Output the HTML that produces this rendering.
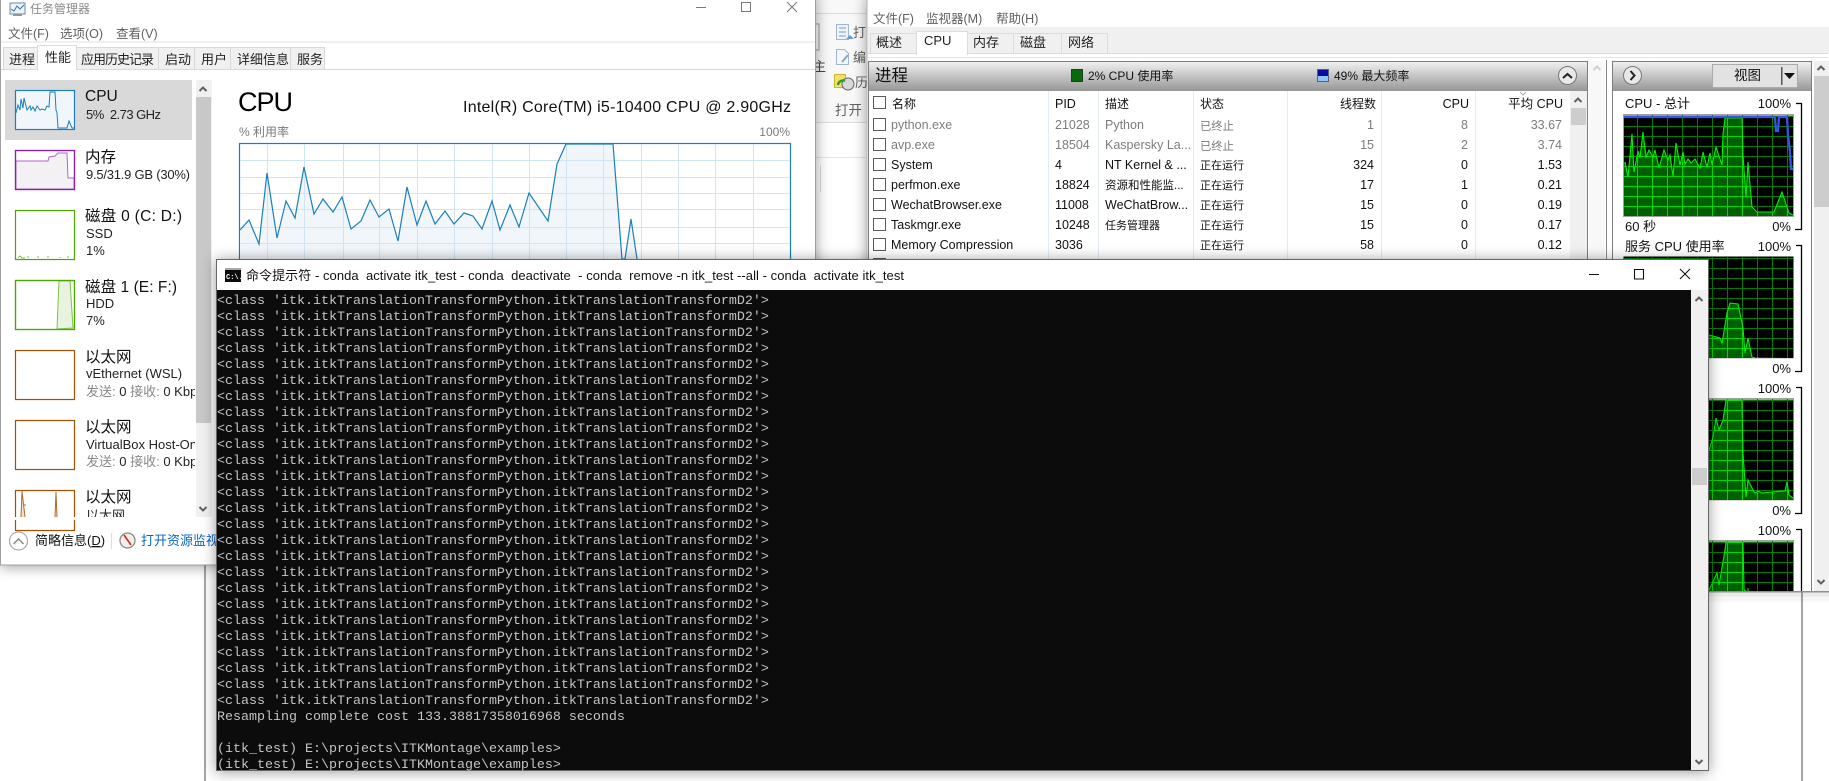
<!DOCTYPE html>
<html><head><meta charset="utf-8"><title>任务管理器</title>
<style>
html,body{margin:0;padding:0;background:#fff;width:1829px;height:781px;overflow:hidden}
svg{display:block}
text{font-family:"Liberation Sans","Noto Sans CJK SC",sans-serif;font-size:12.5px;fill:#111;white-space:pre}
.t{font-size:15.5px;fill:#111}
.s{font-size:13px;fill:#222}
.g{fill:#7c7c7c}
.m{font-size:12.5px;fill:#606060}
.tab{font-size:13px;fill:#222}
.r{text-anchor:end}
.c{font-family:"Liberation Mono","Noto Sans CJK SC",monospace;font-size:13.33px;fill:#c4c4c4}
.sh{filter:drop-shadow(0 1px 7px rgba(0,0,0,.4))}
.ck{fill:#fff;stroke:#5a5a5a;stroke-width:1}
.ch{fill:none;stroke:#606060;stroke-width:2}
.sep{stroke:#e3ebf4;stroke-width:1}
</style></head><body>
<svg width="1829" height="781" viewBox="0 0 1829 781" xmlns="http://www.w3.org/2000/svg">
<defs>
<linearGradient id="hd" x1="0" y1="0" x2="0" y2="1"><stop offset="0" stop-color="#f0f0f0"/><stop offset="1" stop-color="#969696"/></linearGradient>
<g id="grid"><path fill="none" d="M1637.5 115V216M1652.5 115V216M1667.5 115V216M1682.5 115V216M1697.5 115V216M1712.5 115V216M1727.5 115V216M1742.5 115V216M1757.5 115V216M1772.5 115V216M1787.5 115V216M1624 116.5H1793M1624 126.5H1793M1624 136.5H1793M1624 146.5H1793M1624 156.5H1793M1624 166.5H1793M1624 176.5H1793M1624 186.5H1793M1624 196.5H1793M1624 206.5H1793"/></g>
<clipPath id="c1"><polygon points="1624,162 1625,162 1628,177 1632,134 1634,172 1638,151 1640,158 1643,132 1646,157 1649,150 1653,157 1655,150 1659,168 1664,150 1668,160 1670,155 1673,176 1676,143 1680,165 1683,152 1685,164 1688,159 1691,163 1695,159 1700,168 1703,152 1707,167 1710,153 1712,165 1716,147 1722,165 1723,134 1725,118 1742,118 1743,155 1746,197 1748,162 1752,207 1757,212 1774,212 1782,192 1789,213 1793,215 1793,216 1624,216"/></clipPath>
<clipPath id="c2"><polygon points="1709,335 1720,338 1722,343 1727,313 1730,303 1738,304 1743,328 1745,353 1748,338 1752,357 1793,358 1709,358"/></clipPath>
<clipPath id="c3"><polygon points="1709,450 1713,437 1716,418 1719,430 1723,420 1726,400 1742,400 1743,453 1746,497 1748,480 1753,490 1755,493 1758,491 1762,493 1772,492 1785,491 1787,482 1789,495 1793,498 1793,500 1709,500"/></clipPath>
<clipPath id="c4"><polygon points="1709,590 1717,573 1719,585 1725,550 1726,542 1743,542 1743,591 1709,591"/></clipPath>
<clipPath id="cl1"><rect x="86" y="480" width="108" height="37"/></clipPath>
<clipPath id="cl2"><rect x="0" y="0" width="195" height="517"/></clipPath>
<clipPath id="cl3"><rect x="830" y="0" width="37" height="130"/></clipPath>
</defs>

<rect width="1829" height="781" fill="#fff"/>
<!-- background window edges -->
<rect x="204" y="560" width="2" height="221" fill="#a6a6a6"/>
<rect x="1801" y="585" width="2" height="196" fill="#a6a6a6"/>

<!-- ribbon behind -->
<rect x="815" y="0" width="60" height="122" fill="#f8f8f8"/>
<rect x="815" y="13" width="60" height="1" fill="#dcdcdc"/>
<rect x="815" y="122" width="60" height="1" fill="#dcdcdc"/>
<rect x="815" y="157" width="60" height="1" fill="#e6e6e6"/>
<rect x="820" y="165" width="1" height="27" fill="#dedede"/>
<path d="M815 24H819V50H815" fill="#fff" stroke="#999"/>
<text x="813" y="71" style="font-size:13px;fill:#444">主</text>
<g>
<rect x="836.5" y="24.5" width="12" height="15" fill="#eef3f9" stroke="#9fb6cf"/>
<path d="M839 28h7M839 32h7M839 36h7" stroke="#7d9cc0"/><path d="M846 39l4-4 4 4z" fill="#6e9ac8"/>
<path d="M836.5 49.5h8l4 4v11h-12z" fill="#f3f7fb" stroke="#9fb6cf"/>
<path d="M842 62l6-7" stroke="#8aa7c8" stroke-width="2"/>
<rect x="834.5" y="74.5" width="11" height="13" fill="#f7e06a" stroke="#cdb43a"/>
<circle cx="848" cy="84" r="6" fill="#d8d8d8" stroke="#666"/>
<path d="M838 85a5 5 0 0 1 7-4" fill="none" stroke="#2f9e2f" stroke-width="2.500"/>
<g clip-path="url(#cl3)"><text x="853" y="37" class="m" style="font-size:13px">打开</text><text x="853" y="62" class="m" style="font-size:13px">编辑</text><text x="855" y="87" class="m" style="font-size:13px">历史</text></g>
<text x="835" y="115" class="m" style="font-size:13.5px">打开</text>
</g>

<!-- Resource Monitor -->
<rect x="867" y="-5" width="970" height="597" fill="#fff" class="sh"/>
<rect x="866.5" y="0" width="1" height="592" fill="#b5b5b5"/>
<text x="873" y="23" class="m">文件(F)</text><text x="926" y="23" class="m">监视器(M)</text><text x="996" y="23" class="m">帮助(H)</text>
<rect x="868" y="27" width="961" height="26" fill="#f0f0f0"/>
<rect x="868" y="53" width="960" height="1" fill="#dcdcdc"/>
<rect x="868" y="57" width="960" height="1" fill="#e4e4e4"/>
<rect x="870.5" y="33.5" width="46" height="20" fill="#f0f0f0" stroke="#dcdcdc"/>
<rect x="916.5" y="31.5" width="51" height="23" fill="#fff" stroke="#dcdcdc"/>
<rect x="917" y="52" width="50" height="4" fill="#fff"/>
<rect x="967.5" y="33.5" width="46" height="20" fill="#f0f0f0" stroke="#dcdcdc"/>
<rect x="1013.5" y="33.5" width="48" height="20" fill="#f0f0f0" stroke="#dcdcdc"/>
<rect x="1061.5" y="33.5" width="46" height="20" fill="#f0f0f0" stroke="#dcdcdc"/>
<text x="876" y="47" class="tab">概述</text><text x="924" y="45" class="tab">CPU</text><text x="973" y="47" class="tab">内存</text><text x="1020" y="47" class="tab">磁盘</text><text x="1068" y="47" class="tab">网络</text>

<!-- process panel -->
<rect x="868.5" y="61.5" width="719" height="530" fill="#fff" stroke="#7c7c7c"/>
<rect x="869" y="62" width="718" height="29" fill="url(#hd)"/>
<text x="875" y="81" style="font-size:16.5px;fill:#111">进程</text>
<rect x="1071.5" y="69.5" width="11" height="12" fill="#0a6a0a" stroke="#1f3f1f"/>
<text x="1088" y="80" style="font-size:12px">2% CPU 使用率</text>
<rect x="1317.5" y="69.5" width="11" height="12" fill="#8dc4fa" stroke="#55607a"/><rect x="1318" y="70" width="10" height="6" fill="#0a0aa0"/>
<text x="1334" y="80" style="font-size:12px">49% 最大频率</text>
<circle cx="1567.5" cy="75.5" r="9" fill="#e8e8e8" stroke="#777"/>
<path d="M1563 78l4.500-4 4.500 4" fill="none" stroke="#222" stroke-width="2"/>

<path class="sep" d="M1048.500 91V259M1098.500 91V259M1193.500 91V259M1287.500 91V259M1381.500 91V259M1475.500 91V259"/>
<rect class="ck" x="873.500" y="96.500" width="12" height="12"/>
<text x="892" y="108" style="font-size:12px">名称</text><text x="1055" y="108">PID</text><text x="1105" y="108" style="font-size:12px">描述</text><text x="1200" y="108" style="font-size:12px">状态</text>
<text x="1376" y="108" class="r" style="font-size:12px">线程数</text><text x="1469" y="108" class="r">CPU</text><text x="1563" y="108" class="r">平均 CPU</text>
<path d="M1520 92l3 3 3-3" fill="none" stroke="#aaa"/>

<rect class="ck" x="873.500" y="118.500" width="12" height="12"/>
<rect class="ck" x="873.500" y="138.500" width="12" height="12"/>
<rect class="ck" x="873.500" y="158.500" width="12" height="12"/>
<rect class="ck" x="873.500" y="178.500" width="12" height="12"/>
<rect class="ck" x="873.500" y="198.500" width="12" height="12"/>
<rect class="ck" x="873.500" y="218.500" width="12" height="12"/>
<rect class="ck" x="873.500" y="238.500" width="12" height="12"/>
<rect class="ck" x="873.500" y="258.500" width="12" height="12"/>

<text x="891" y="129" class="g">python.exe</text><text x="1055" y="129" class="g">21028</text><text x="1105" y="129" class="g">Python</text><text x="1200" y="130" class="g" style="font-size:11.300px">已终止</text><text x="1374" y="129" class="g r">1</text><text x="1468" y="129" class="g r">8</text><text x="1562" y="129" class="g r">33.67</text>
<text x="891" y="149" class="g">avp.exe</text><text x="1055" y="149" class="g">18504</text><text x="1105" y="149" class="g">Kaspersky La...</text><text x="1200" y="150" class="g" style="font-size:11.300px">已终止</text><text x="1374" y="149" class="g r">15</text><text x="1468" y="149" class="g r">2</text><text x="1562" y="149" class="g r">3.74</text>
<text x="891" y="169">System</text><text x="1055" y="169">4</text><text x="1105" y="169">NT Kernel &amp; ...</text><text x="1200" y="169" style="font-size:11px">正在运行</text><text x="1374" y="169" class="r">324</text><text x="1468" y="169" class="r">0</text><text x="1562" y="169" class="r">1.53</text>
<text x="891" y="189">perfmon.exe</text><text x="1055" y="189">18824</text><text x="1105" y="189" style="font-size:11.500px">资源和性能监...</text><text x="1200" y="189" style="font-size:11px">正在运行</text><text x="1374" y="189" class="r">17</text><text x="1468" y="189" class="r">1</text><text x="1562" y="189" class="r">0.21</text>
<text x="891" y="209">WechatBrowser.exe</text><text x="1055" y="209">11008</text><text x="1105" y="209">WeChatBrow...</text><text x="1200" y="209" style="font-size:11px">正在运行</text><text x="1374" y="209" class="r">15</text><text x="1468" y="209" class="r">0</text><text x="1562" y="209" class="r">0.19</text>
<text x="891" y="229">Taskmgr.exe</text><text x="1055" y="229">10248</text><text x="1105" y="229" style="font-size:11px">任务管理器</text><text x="1200" y="229" style="font-size:11px">正在运行</text><text x="1374" y="229" class="r">15</text><text x="1468" y="229" class="r">0</text><text x="1562" y="229" class="r">0.17</text>
<text x="891" y="249">Memory Compression</text><text x="1055" y="249">3036</text><text x="1200" y="249" style="font-size:11px">正在运行</text><text x="1374" y="249" class="r">58</text><text x="1468" y="249" class="r">0</text><text x="1562" y="249" class="r">0.12</text>

<rect x="1570" y="91" width="17" height="170" fill="#f0f0f0"/>
<rect x="1571" y="108" width="15" height="17" fill="#cdcdcd"/>
<path class="ch" d="M1574.500 102l3.500-3.500 3.500 3.500"/>

<!-- middle scroll column -->
<rect x="1589" y="61" width="16" height="531" fill="#f8f8f8"/>
<path d="M1593.500 70l3.500-3.500 3.500 3.500" fill="none" stroke="#d0d0d0" stroke-width="2"/>
<rect x="1606" y="60" width="1" height="532" fill="#888"/>

<!-- right panel -->
<rect x="1612.500" y="61.500" width="199" height="530" fill="#fff" stroke="#7c7c7c"/>
<rect x="1613" y="62" width="198" height="29" fill="url(#hd)"/>
<circle cx="1632.500" cy="75.500" r="9" fill="#e8e8e8" stroke="#777"/>
<path d="M1630.500 71l4 4.500-4 4.500" fill="none" stroke="#222" stroke-width="2"/>
<rect x="1712.500" y="64.500" width="85" height="23" fill="#e2e2e2" stroke="#aaa"/>
<text x="1734" y="80" style="font-size:13.500px">视图</text>
<rect x="1781" y="67" width="1.500" height="18" fill="#555"/>
<path d="M1784 73h11l-5.500 6z" fill="#111"/>

<rect x="1814" y="61" width="15" height="531" fill="#f0f0f0"/>
<rect x="1814" y="76" width="15" height="131" fill="#cdcdcd"/>
<path class="ch" d="M1817.500 70l3.500-3.500 3.500 3.500"/>
<path class="ch" d="M1817.500 580l3.500 3.500 3.500-3.500"/>

<text x="1625" y="108" style="font-size:13px">CPU - 总计</text><text x="1791" y="108" class="r" style="font-size:13px">100%</text>
<text x="1625" y="231" style="font-size:13px">60 秒</text><text x="1791" y="231" class="r" style="font-size:13px">0%</text>
<text x="1625" y="251" style="font-size:13px">服务 CPU 使用率</text><text x="1791" y="251" class="r" style="font-size:13px">100%</text>
<text x="1791" y="373" class="r" style="font-size:13px">0%</text><text x="1791" y="393" class="r" style="font-size:13px">100%</text>
<text x="1791" y="515" class="r" style="font-size:13px">0%</text><text x="1791" y="535" class="r" style="font-size:13px">100%</text>
<path d="M1796 103.500H1801.500V229.500H1795M1796 245.500H1801.500V371.500H1795M1796 387.500H1801.500V513.500H1795M1796 529.500H1801.500V592" fill="none" stroke="#000" stroke-width="1.300"/>

<!-- graph 1 -->
<rect x="1623.500" y="114.500" width="170" height="102" fill="#000" stroke="#a0a0a0"/>
<rect x="1623" y="114" width="171" height="2" fill="#a0a0a0"/>
<use href="#grid" stroke="#007f00"/>
<g clip-path="url(#c1)"><rect x="1624" y="116" width="170" height="100" fill="#006000"/><use href="#grid" stroke="#00d800"/></g>
<polyline fill="none" stroke="#00f000" stroke-width="1.100" points="1625,162 1628,177 1632,134 1634,172 1638,151 1640,158 1643,132 1646,157 1649,150 1653,157 1655,150 1659,168 1664,150 1668,160 1670,155 1673,176 1676,143 1680,165 1683,152 1685,164 1688,159 1691,163 1695,159 1700,168 1703,152 1707,167 1710,153 1712,165 1716,147 1722,165 1723,134 1725,118 1742,118 1743,155 1746,197 1748,162 1752,207 1757,212 1774,212 1782,192 1789,213 1793,215"/>
<polyline fill="none" stroke="#3358e6" stroke-width="2.300" points="1624,117 1773,117 1775,118 1776,131 1778,131 1779,117 1787,117 1788,135 1790,152 1791,169 1793,169"/>

<!-- graph 2 -->
<rect x="1623.500" y="256.500" width="170" height="102" fill="#000"/>
<use href="#grid" y="142" stroke="#007f00"/>
<g clip-path="url(#c2)"><rect x="1624" y="258" width="170" height="100" fill="#006000"/><use href="#grid" y="142" stroke="#00d800"/></g>
<polyline fill="none" stroke="#00f000" stroke-width="1.100" points="1709,335 1720,338 1722,343 1727,313 1730,303 1738,304 1743,328 1745,353 1748,338 1752,357 1755,358"/>
<rect x="1623" y="358" width="171" height="1" fill="#d8d8d8"/>

<!-- graph 3 -->
<rect x="1623.500" y="398.500" width="170" height="102" fill="#000"/>
<rect x="1623" y="398" width="171" height="2" fill="#a0a0a0"/>
<use href="#grid" y="284" stroke="#007f00"/>
<g clip-path="url(#c3)"><rect x="1624" y="400" width="170" height="100" fill="#006000"/><use href="#grid" y="284" stroke="#00d800"/></g>
<polyline fill="none" stroke="#00f000" stroke-width="1.100" points="1709,450 1713,437 1716,418 1719,430 1723,420 1726,400 1742,400 1743,453 1746,497 1748,480 1753,490 1755,493 1758,491 1762,493 1772,492 1785,491 1787,482 1789,495 1793,498"/>
<rect x="1623" y="500" width="171" height="1" fill="#d8d8d8"/>

<!-- graph 4 -->
<rect x="1623.500" y="540.500" width="170" height="51" fill="#000"/>
<rect x="1623" y="540" width="171" height="2" fill="#a0a0a0"/>
<use href="#grid" y="426" stroke="#007f00"/>
<g clip-path="url(#c4)"><rect x="1624" y="542" width="170" height="50" fill="#006000"/><use href="#grid" y="426" stroke="#00d800"/></g>
<polyline fill="none" stroke="#00f000" stroke-width="1.100" points="1709,590 1717,573 1719,585 1725,550 1726,542 1743,542 1744,590 1746,591"/>
<path d="M1748 591v-3" stroke="#00f000"/>

<!-- cover below resmon -->
<rect x="1640" y="592" width="189" height="189" fill="#fff"/>
<rect x="1801" y="592" width="2" height="189" fill="#a6a6a6"/>
<rect x="1640" y="591" width="189" height="1.500" fill="#909090"/>
<rect x="1640" y="592.500" width="189" height="4" fill="#000" opacity=".08"/>
<rect x="1640" y="596.500" width="189" height="5" fill="#000" opacity=".035"/>

<!-- Task Manager -->
<rect x="0.500" y="-5" width="815" height="570" fill="#fff" stroke="#a0a0a0" class="sh"/>
<g>
<rect x="10" y="3" width="15" height="11" fill="#eef3f7" stroke="#6d8aa0"/>
<path d="M11 9l3 2 3-5 3 3 4-4" fill="none" stroke="#2b7bb9"/>
<rect x="13" y="14" width="9" height="2" fill="#8a9aa5"/>
<text x="30" y="13" style="font-size:12px;fill:#8a8a8a">任务管理器</text>
</g>
<path d="M696 7.500h10M741.500 2.500h9v9h-9zM787 2l10 10M797 2l-10 10" fill="none" stroke="#777"/>
<text x="8" y="38" class="m">文件(F)</text><text x="60" y="38" class="m">选项(O)</text><text x="116" y="38" class="m">查看(V)</text>
<rect x="1" y="41" width="814" height="2" fill="#f0f0f0"/>
<rect x="1" y="69" width="814" height="1" fill="#d9d9d9"/>
<path fill="#f0f0f0" stroke="#d9d9d9" d="M3.500 69.500V47.500H37.500V69.500ZM76.500 69.500V47.500H158.500V69.500ZM158.500 69.500V47.500H194.500V69.500ZM194.500 69.500V47.500H230.500V69.500ZM230.500 69.500V47.500H290.500V69.500ZM290.500 69.500V47.500H324.500V69.500Z"/>
<path fill="#fff" stroke="#d9d9d9" d="M37.500 70V45.500H76.500V70"/>
<rect x="38" y="68" width="38" height="3" fill="#fff"/>
<text x="9" y="64" class="tab">进程</text><text x="45" y="62" class="tab">性能</text><text x="81" y="64" class="tab" textLength="73">应用历史记录</text><text x="165" y="64" class="tab">启动</text><text x="201" y="64" class="tab">用户</text><text x="237" y="64" class="tab">详细信息</text><text x="297" y="64" class="tab">服务</text>

<!-- left list -->
<rect x="5" y="80" width="187" height="60" fill="#d9d9d9"/>
<rect x="196" y="80" width="16" height="437" fill="#f0f0f0"/>
<rect x="196" y="97" width="15" height="326" fill="#c8c8c8"/>
<path class="ch" d="M199.500 91l3.500-3.500 3.500 3.500"/>
<path class="ch" d="M199.500 507l3.500 3.500 3.500-3.500"/>

<rect x="15.500" y="90.500" width="59" height="39" fill="#f1f6fa" stroke="#1b7fbc" stroke-width="1.200"/>
<polyline fill="none" stroke="#1b7fbc" stroke-width="1" points="16,113 18,105 20,110 21,99 23,108 24,98 27,110 30,106 31,110 33,107 35,111 37,106 40,110 42,109 45,110 47,106 49,107 50,92 55,92 56,110 57,113 58,128 67,128 69,121 72,128 74,128"/>
<rect x="15.500" y="150.500" width="59" height="39" fill="#fff" stroke="#8a1fb0" stroke-width="1.200"/>
<polygon fill="#f4f1f4" stroke="#b066c8" points="16,161 35,161 48,161 49,157 55,156 58,153 67,153 68,178 74,178 74,189 16,189"/>
<rect x="15.500" y="150.500" width="59" height="39" fill="none" stroke="#8a1fb0" stroke-width="1.200"/>
<rect x="15.500" y="210.500" width="59" height="49" fill="#fff" stroke="#4ea600" stroke-width="1.200"/>
<path d="M18 258l2-2 2 2h3M28 258v-2M38 258v-2M48 258v-2M60 258v-1M68 258v-2" fill="none" stroke="#7cc24a"/>
<rect x="15.500" y="280.500" width="59" height="49" fill="#fff" stroke="#4ea600" stroke-width="1.200"/>
<polygon fill="#e9f4e0" stroke="#7cc24a" points="57,329 59,281 70,281 73,328"/>
<rect x="15.500" y="280.500" width="59" height="49" fill="none" stroke="#4ea600" stroke-width="1.200"/>
<rect x="15.500" y="350.500" width="59" height="49" fill="#fff" stroke="#a74f01" stroke-width="1.200"/>
<rect x="15.500" y="420.500" width="59" height="49" fill="#fff" stroke="#a74f01" stroke-width="1.200"/>
<rect x="15.500" y="490.500" width="59" height="40" fill="#fff" stroke="#a74f01" stroke-width="1.200"/>
<path d="M21 517L22 491L25 517M24 505h2M55 517L56 492L57 517" fill="#f0dfcf" stroke="#b46a28"/>

<g clip-path="url(#cl2)">
<text x="85" y="101" class="t">CPU</text><text x="86" y="119" class="s" textLength="75">5%  2.73 GHz</text>
<text x="85" y="162" class="t">内存</text><text x="86" y="179" class="s" textLength="104">9.5/31.9 GB (30%)</text>
<text x="85" y="221" class="t" textLength="97">磁盘 0 (C: D:)</text><text x="86" y="238" class="s">SSD</text><text x="86" y="255" class="s">1%</text>
<text x="85" y="292" class="t" textLength="92">磁盘 1 (E: F:)</text><text x="86" y="308" class="s">HDD</text><text x="86" y="325" class="s">7%</text>
<text x="85" y="362" class="t">以太网</text><text x="86" y="378" class="s">vEthernet (WSL)</text>
<text x="86" y="396" class="s"><tspan fill="#888">发送:</tspan> 0 <tspan fill="#888">接收:</tspan> 0 Kbps</text>
<text x="85" y="432" class="t">以太网</text><text x="86" y="449" class="s">VirtualBox Host-Only</text>
<text x="86" y="466" class="s"><tspan fill="#888">发送:</tspan> 0 <tspan fill="#888">接收:</tspan> 0 Kbps</text>
<text x="85" y="502" class="t">以太网</text>
<g clip-path="url(#cl1)"><text x="86" y="520" class="s">以太网</text></g>
</g>
<rect x="1" y="517" width="195" height="3" fill="#fff"/>

<!-- perf header -->
<text x="238" y="111" style="font-size:27px;fill:#000" textLength="55">CPU</text>
<text x="463" y="112" style="font-size:16px;fill:#111" textLength="328">Intel(R) Core(TM) i5-10400 CPU @ 2.90GHz</text>
<text x="239" y="136" style="font-size:12px;fill:#7a7a7a">% 利用率</text>
<text x="790" y="136" class="r" style="font-size:12px;fill:#7a7a7a">100%</text>

<!-- perf graph -->
<rect x="239.500" y="143.500" width="551" height="120" fill="#fff" stroke="#1b7fbc" stroke-width="1.200"/>
<polygon fill="#f1f6fa" points="240,230 249,220 259,244 267,173 277,238 286,201 295,218 304,167 314,214 323,199 333,212 342,197 351,229 361,221 370,200 379,217 389,209 398,241 407,187 417,225 426,201 435,224 445,211 454,224 464,213 473,216 482,229 492,201 500,230 510,205 519,227 529,193 548,221 557,164 566,144 613,144 622,259 625,259 631,219 637,259 640,264 240,264"/>
<path fill="none" stroke="#d0e5f2" d="M267.500 144V264M304.500 144V264M343.500 144V264M379.500 144V264M417.500 144V264M454.500 144V264M492.500 144V264M529.500 144V264M566.500 144V264M603.500 144V264M641.500 144V264M678.500 144V264M715.500 144V264M753.500 144V264M240 160.500H790M240 177.500H790M240 193.500H790M240 209.500H790M240 227.500H790M240 243.500H790"/>
<polyline fill="none" stroke="#1b7fbc" stroke-width="1.200" points="240,230 249,220 259,244 267,173 277,238 286,201 295,218 304,167 314,214 323,199 333,212 342,197 351,229 361,221 370,200 379,217 389,209 398,241 407,187 417,225 426,201 435,224 445,211 454,224 464,213 473,216 482,229 492,201 500,230 510,205 519,227 529,193 548,221 557,164 566,144 613,144 622,259 625,259 631,219 637,259"/>

<!-- footer -->
<circle cx="18.500" cy="541" r="9" fill="#fff" stroke="#aaa" stroke-width="1.200"/>
<path d="M13.500 544l5-5 5 5" fill="none" stroke="#888" stroke-width="1.500"/>
<text x="35" y="545" style="font-size:13px">简略信息(<tspan text-decoration="underline">D</tspan>)</text>
<rect x="111" y="533" width="1" height="16" fill="#ddd"/>
<circle cx="127.500" cy="540.500" r="7.500" fill="#f3eee8" stroke="#888" stroke-width="1.300"/>
<path d="M124 535l7 10" stroke="#c62828" stroke-width="1.600"/>
<text x="141" y="545" style="font-size:13px;fill:#0a66c2">打开资源监视器</text>

<!-- cmd window -->
<rect x="216.500" y="259.500" width="1492" height="511" fill="#fff" stroke="#666" class="sh"/>
<rect x="217" y="290" width="1474" height="480" fill="#0c0c0c"/>
<rect x="1691" y="290" width="17" height="480" fill="#f0f0f0"/>
<rect x="1692" y="468" width="15" height="17" fill="#cdcdcd"/>
<path class="ch" d="M1695.500 301l3.500-3.500 3.500 3.500"/>
<path class="ch" d="M1695.500 760l3.500 3.500 3.500-3.500"/>
<rect x="225" y="268" width="16" height="14" fill="#0c0c0c"/>
<rect x="225" y="268" width="16" height="2" fill="#aaa"/>
<text x="226" y="279" style="font-size:7px;font-weight:bold;fill:#fff;font-family:'Liberation Mono',monospace">C:\.</text>
<text x="246" y="280" style="font-size:13px;fill:#111" textLength="658">命令提示符 - conda  activate itk_test - conda  deactivate  - conda  remove -n itk_test --all - conda  activate itk_test</text>
<path d="M1589 274.500h10M1634.500 269.500h9v9.500h-9zM1680 269l10 10M1690 269l-10 10" fill="none" stroke="#111" stroke-width="1.100"/>

<text class="c" x="217" y="304">&lt;class 'itk.itkTranslationTransformPython.itkTranslationTransformD2'&gt;</text>
<text class="c" x="217" y="320">&lt;class 'itk.itkTranslationTransformPython.itkTranslationTransformD2'&gt;</text>
<text class="c" x="217" y="336">&lt;class 'itk.itkTranslationTransformPython.itkTranslationTransformD2'&gt;</text>
<text class="c" x="217" y="352">&lt;class 'itk.itkTranslationTransformPython.itkTranslationTransformD2'&gt;</text>
<text class="c" x="217" y="368">&lt;class 'itk.itkTranslationTransformPython.itkTranslationTransformD2'&gt;</text>
<text class="c" x="217" y="384">&lt;class 'itk.itkTranslationTransformPython.itkTranslationTransformD2'&gt;</text>
<text class="c" x="217" y="400">&lt;class 'itk.itkTranslationTransformPython.itkTranslationTransformD2'&gt;</text>
<text class="c" x="217" y="416">&lt;class 'itk.itkTranslationTransformPython.itkTranslationTransformD2'&gt;</text>
<text class="c" x="217" y="432">&lt;class 'itk.itkTranslationTransformPython.itkTranslationTransformD2'&gt;</text>
<text class="c" x="217" y="448">&lt;class 'itk.itkTranslationTransformPython.itkTranslationTransformD2'&gt;</text>
<text class="c" x="217" y="464">&lt;class 'itk.itkTranslationTransformPython.itkTranslationTransformD2'&gt;</text>
<text class="c" x="217" y="480">&lt;class 'itk.itkTranslationTransformPython.itkTranslationTransformD2'&gt;</text>
<text class="c" x="217" y="496">&lt;class 'itk.itkTranslationTransformPython.itkTranslationTransformD2'&gt;</text>
<text class="c" x="217" y="512">&lt;class 'itk.itkTranslationTransformPython.itkTranslationTransformD2'&gt;</text>
<text class="c" x="217" y="528">&lt;class 'itk.itkTranslationTransformPython.itkTranslationTransformD2'&gt;</text>
<text class="c" x="217" y="544">&lt;class 'itk.itkTranslationTransformPython.itkTranslationTransformD2'&gt;</text>
<text class="c" x="217" y="560">&lt;class 'itk.itkTranslationTransformPython.itkTranslationTransformD2'&gt;</text>
<text class="c" x="217" y="576">&lt;class 'itk.itkTranslationTransformPython.itkTranslationTransformD2'&gt;</text>
<text class="c" x="217" y="592">&lt;class 'itk.itkTranslationTransformPython.itkTranslationTransformD2'&gt;</text>
<text class="c" x="217" y="608">&lt;class 'itk.itkTranslationTransformPython.itkTranslationTransformD2'&gt;</text>
<text class="c" x="217" y="624">&lt;class 'itk.itkTranslationTransformPython.itkTranslationTransformD2'&gt;</text>
<text class="c" x="217" y="640">&lt;class 'itk.itkTranslationTransformPython.itkTranslationTransformD2'&gt;</text>
<text class="c" x="217" y="656">&lt;class 'itk.itkTranslationTransformPython.itkTranslationTransformD2'&gt;</text>
<text class="c" x="217" y="672">&lt;class 'itk.itkTranslationTransformPython.itkTranslationTransformD2'&gt;</text>
<text class="c" x="217" y="688">&lt;class 'itk.itkTranslationTransformPython.itkTranslationTransformD2'&gt;</text>
<text class="c" x="217" y="704">&lt;class 'itk.itkTranslationTransformPython.itkTranslationTransformD2'&gt;</text>
<text class="c" x="217" y="720">Resampling complete cost 133.38817358016968 seconds</text>
<text class="c" x="217" y="752">(itk_test) E:\projects\ITKMontage\examples&gt;</text>
<text class="c" x="217" y="768">(itk_test) E:\projects\ITKMontage\examples&gt;</text>
</svg>
</body></html>
